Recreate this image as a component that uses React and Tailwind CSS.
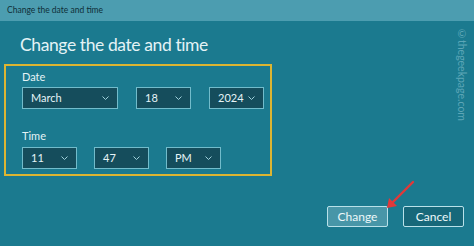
import React from "react";

function Chevron() {
  return (
    <svg width="7" height="4" viewBox="0 0 7 4" className="shrink-0">
      <path d="M0.5 0.5 L3.5 3.5 L6.5 0.5" fill="none" stroke="#9fd0da" strokeWidth="1" />
    </svg>
  );
}

function Drop({ label, w }) {
  return (
    <div
      className={`h-[22px] ${w} border border-[#72bccb] bg-[#154d5c] flex items-center justify-between pl-[8px] pr-[8px] text-[11px] text-[#e6f4f7]`}
    >
      <span>{label}</span>
      <Chevron />
    </div>
  );
}

export default function App() {
  return (
    <div className="w-[474px] h-[246px] bg-[#1b7a8f] relative overflow-hidden font-['Lato',sans-serif]">
      <div className="h-[21px] bg-[#4c9db0] pl-[7px] flex items-center text-[8.5px] text-[#0f2f38]">
        Change the date and time
      </div>
      <div className="pl-[20px] pt-[11px] text-[17.5px] tracking-[-0.4px] leading-[26px] text-[#e4f3f6]">
        Change the date and time
      </div>
      <div className="ml-[4px] mt-[6px] w-[268px] h-[112px] border-2 border-[#dcb531] pl-[16px] pt-[4px]">
        <div className="text-[11px] leading-[14px] text-[#e4f3f6]">Date</div>
        <div className="mt-[3px] flex gap-[18px]">
          <Drop label="March" w="w-[96px]" />
          <Drop label="18" w="w-[55px]" />
          <Drop label="2024" w="w-[55px]" />
        </div>
        <div className="mt-[20px] text-[11px] leading-[14px] text-[#e4f3f6]">Time</div>
        <div className="mt-[4px] flex gap-[17px]">
          <Drop label="11" w="w-[55px]" />
          <Drop label="47" w="w-[55px]" />
          <Drop label="PM" w="w-[55px]" />
        </div>
      </div>
      <div className="mt-[30px] flex justify-end gap-[15px] pr-[10px]">
        <div className="w-[61px] h-[21px] border border-[#b9e1e9] rounded-[2px] bg-[#4896a8] flex items-center justify-center text-[12px] text-[#eef8fa]">
          Change
        </div>
        <div className="w-[61px] h-[21px] border border-[#b9e1e9] rounded-[2px] bg-[#17687a] flex items-center justify-center text-[12px] text-[#eef8fa]">
          Cancel
        </div>
      </div>
      <div className="absolute left-[453px] top-[28px] [writing-mode:vertical-rl] text-[10.5px] text-[#5da6b7]">
        ©thegeekpage.com
      </div>
      <svg className="absolute left-0 top-0" width="474" height="246">
        <line x1="413" y1="182" x2="392" y2="203" stroke="#e0393a" strokeWidth="2.4" strokeLinecap="round" />
        <path d="M387 208 L389 198 L397 206 Z" fill="#e0393a" />
      </svg>
    </div>
  );
}
